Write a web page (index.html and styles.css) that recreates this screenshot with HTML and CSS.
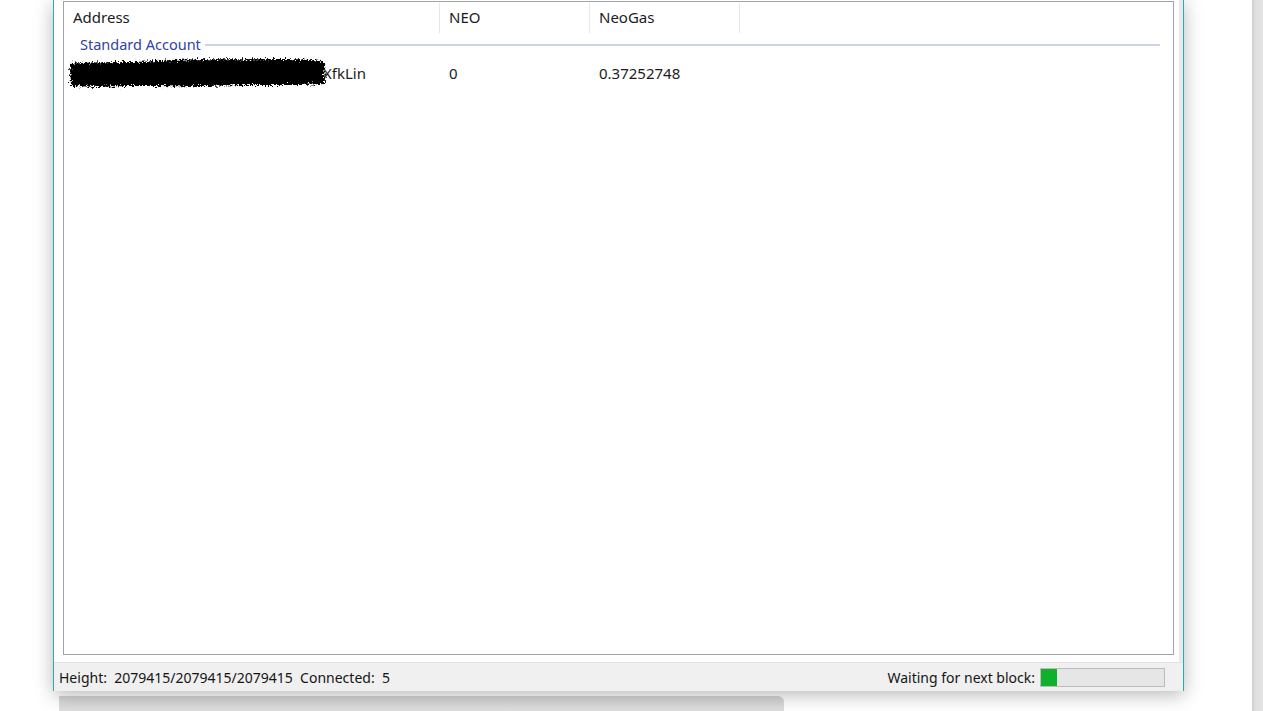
FILE: index.html
```html
<!DOCTYPE html>
<html>
<head>
<meta charset="utf-8">
<link rel="stylesheet" href="styles.css">
</head>
<body>
<div class="desktop">
  <div class="window">
    <div class="client">
      <div class="list">
        <div class="header">
          <div class="hcell c-addr">Address</div>
          <div class="hcell c-neo">NEO</div>
          <div class="hcell c-gas">NeoGas</div>
          <div class="hcell c-rest"></div>
        </div>
        <div class="group">
          <span class="group-title">Standard Account</span>
          <span class="group-line"></span>
        </div>
        <div class="row">
          <div class="cell c-addr addr">
            <svg class="scribble" width="262" height="38" viewBox="0 0 262 38">
              <defs>
                <filter id="rough" x="-5%" y="-25%" width="110%" height="150%">
                  <feTurbulence type="fractalNoise" baseFrequency="0.6" numOctaves="3" seed="7" result="n"/>
                  <feDisplacementMap in="SourceGraphic" in2="n" scale="8" xChannelSelector="R" yChannelSelector="G"/>
                </filter>
              </defs>
              <path filter="url(#rough)" fill="#060606" d="M3 10 C30 7 60 9 90 7 C130 4 170 6 210 5 C232 5 247 6 257 7 L258 30 C222 32 182 30 142 32 C102 33 62 31 32 33 L4 32 Z"/>
            </svg>
            <span class="addr-tail">XfkLin</span>
          </div>
          <div class="cell c-neo">0</div>
          <div class="cell c-gas">0.37252748</div>
        </div>
      </div>
      <div class="divider"></div>
    </div>
    <div class="status">
      <div class="status-left">Height:  2079415/2079415/2079415  Connected:  5</div>
      <div class="status-right">
        <span>Waiting for next block:</span>
        <div class="progress"><div class="progress-fill" style="width: 13%"></div></div>
      </div>
    </div>
  </div>
  <div class="back-window"></div>
  <div class="edge-bar"></div>
</div>
</body>
</html>
```

FILE: styles.css
```css
html, body {
  margin: 0;
  padding: 0;
  background: #ffffff;
}
body {
  width: 1263px;
  height: 711px;
  overflow: hidden;
  font-family: "Noto Sans", "Open Sans", sans-serif;
  font-size: 15px;
  color: #1b1b1b;
}
.desktop {
  position: relative;
  width: 1263px;
  height: 711px;
  padding-left: 53px;
  box-sizing: border-box;
}
.window {
  position: relative;
  z-index: 2;
  width: 1131px;
  height: 691px;
  box-sizing: border-box;
  border-left: 1px solid #2aa8b6;
  border-right: 1px solid #2aa8b6;
  background: #ffffff;
  box-shadow: 0 4px 18px rgba(0, 0, 0, 0.28);
  display: flex;
  flex-direction: column;
}
.client {
  flex: 1;
  display: flex;
  flex-direction: column;
  padding: 1px 0 0 9px;
  background: linear-gradient(to left, #e9e9e9 0 4px, #ffffff 4px);
}
.list {
  width: 1111px;
  height: 654px;
  box-sizing: border-box;
  border: 1px solid #9ea3a8;
  background: #ffffff;
}
.header {
  display: flex;
  height: 31px;
  align-items: stretch;
}
.hcell {
  display: flex;
  align-items: center;
  padding: 0 0 2px 9px;
  box-sizing: border-box;
  border-right: 1px solid #e6e6e6;
  margin-top: 1px;
}
.c-addr { width: 376px; }
.c-neo { width: 150px; }
.c-gas { width: 150px; }
.c-rest { border-right: none; flex: 1; }
.group {
  display: flex;
  align-items: center;
  height: 24px;
  padding: 0 13px 0 16px;
}
.group-title {
  color: #2f43a8;
  font-size: 14.5px;
  margin-top: -2px;
}
.group-line {
  flex: 1;
  height: 2px;
  margin-left: 4px;
  margin-top: 0;
  background: #cdd3ec;
}
.row {
  display: flex;
  height: 32px;
  align-items: center;
}
.cell {
  padding-left: 9px;
  box-sizing: border-box;
}
.addr {
  display: flex;
  align-items: center;
  padding-left: 3px;
}
.scribble {
  position: relative;
  z-index: 1;
  flex: none;
  margin: -3px 0;
}
.addr-tail {
  margin-left: -6px;
}
.divider {
  height: 7px;
  border-bottom: 1px solid #e2e2e2;
  margin-left: -9px;
}
.status {
  height: 28px;
  background: #f0f0f0;
  display: flex;
  align-items: center;
  justify-content: space-between;
  padding: 0 18px 0 5px;
  font-size: 14px;
  white-space: pre;
  color: #151515;
}
.status-right {
  display: flex;
  align-items: center;
  gap: 5px;
}
.progress {
  width: 125px;
  height: 19px;
  box-sizing: border-box;
  border: 1px solid #bcbcbc;
  background: #e6e6e6;
}
.progress-fill {
  height: 100%;
  background: #10b02a;
}
.back-window {
  position: absolute;
  left: 59px;
  top: 696px;
  width: 725px;
  height: 20px;
  border-radius: 0 6px 0 0;
  background: linear-gradient(to bottom, #d4d4d4, #e2e2e2);
  z-index: 1;
}
.edge-bar {
  position: absolute;
  right: 0;
  top: 0;
  width: 11px;
  height: 711px;
  background: linear-gradient(to right, #cfcfcf, #e0e0e0 4px, #e4e4e4);
}
```
